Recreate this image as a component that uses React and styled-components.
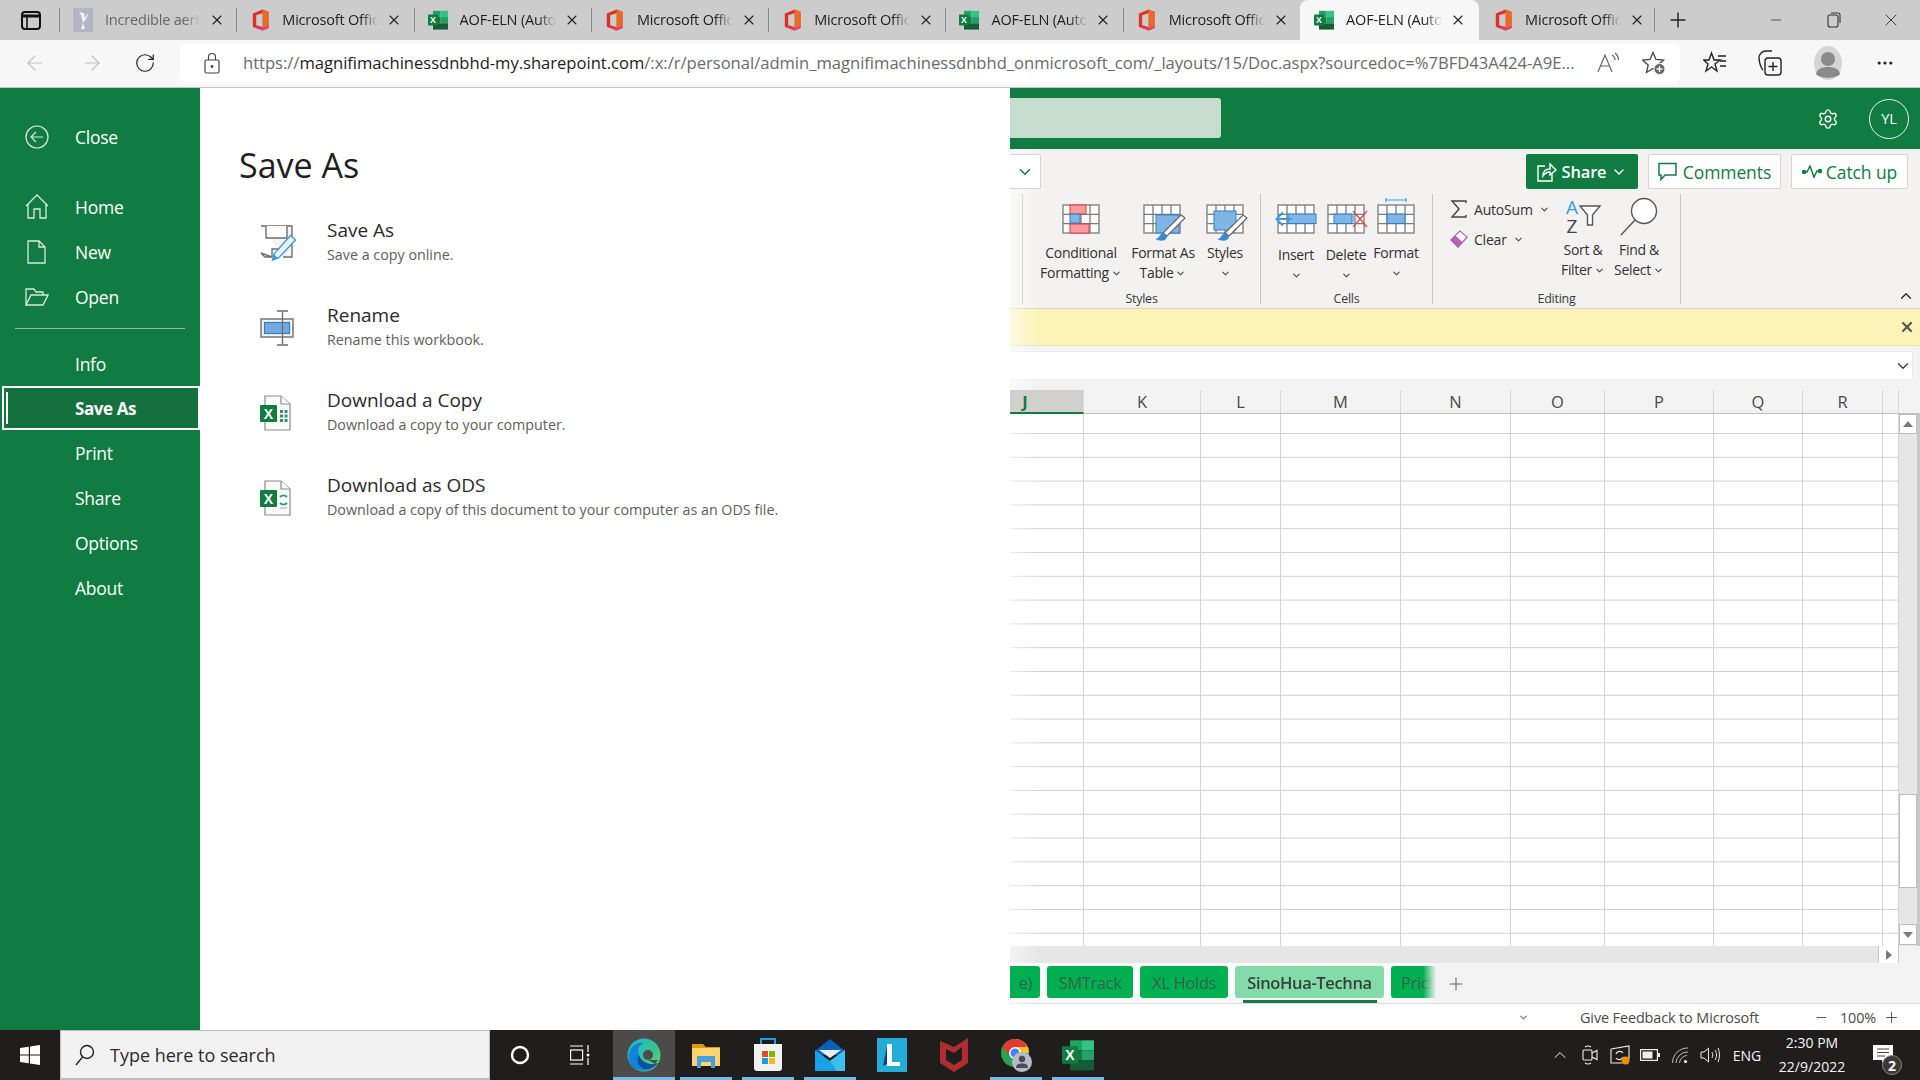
import React from "react";
import styled, { createGlobalStyle } from "styled-components";
import { Settings, ChevronDown, ChevronUp, X, Plus, Minus, RotateCw, ArrowLeft, ArrowRight, MoreHorizontal } from "lucide-react";

const Global = createGlobalStyle`
  html, body { margin: 0; padding: 0; background: #fff; }
  body { font-family: "Open Sans", "Noto Sans", sans-serif; color: #252423; }
  * { box-sizing: border-box; }
  svg { display: block; flex-shrink: 0; }
`;

const Page = styled.div`
  width: 1920px; height: 1080px; display: flex; flex-direction: column; overflow: hidden;
`;

/* ---------- browser chrome ---------- */
const TabStrip = styled.div`
  height: 40px; background: #cccccc; display: flex; align-items: stretch;
`;
const SideToggle = styled.div`
  width: 59px; display: flex; align-items: center; justify-content: center; padding-left: 2px;
`;
const Tab = styled.div`
  position: relative; width: ${p => p.$w || 177.3}px; display: flex; align-items: center; padding-left: 14px;
  background: ${p => (p.$active ? "#f7f7f7" : "transparent")};
  border-radius: ${p => (p.$active ? "8px 8px 0 0" : "0")};
  &::before {
    content: ""; position: absolute; left: 0; top: 8px; bottom: 8px; width: 1px;
    background: ${p => (p.$nosep ? "transparent" : "#8a8a8a")};
  }
`;
const TabIcon = styled.div`
  width: 20px; height: 24px; display: flex; align-items: center; justify-content: center; margin-right: 12px;
`;
const TabTitle = styled.div`
  width: 96px; margin-top: -2px; font-size: 14.5px; letter-spacing: -0.2px; white-space: nowrap; overflow: hidden; color: ${p => p.$dim ? "#666" : "#222"};
  -webkit-mask-image: linear-gradient(to right, #000 82%, transparent 100%);
  mask-image: linear-gradient(to right, #000 82%, transparent 100%);
`;
const TabClose = styled.div`
  width: 32px; display: flex; justify-content: center; color: #222;
`;
const NewTab = styled.div`
  width: 46px; display: flex; align-items: center; justify-content: center; color: #222;
  border-left: 1px solid #8a8a8a; margin: 8px 0; margin-left: -1px;
`;
const WinControls = styled.div`
  margin-left: auto; display: flex; align-items: center; color: #333;
`;
const WinBtn = styled.div`
  width: 57.5px; display: flex; justify-content: center;
`;

const Toolbar = styled.div`
  height: 48px; background: #f7f7f7; border-bottom: 1px solid #c4c4c4; display: flex; align-items: center; padding: 0 9px 2px 7px;
`;
const ToolBtn = styled.div`
  width: ${p => p.$w}px; display: flex; justify-content: center; align-items: center; color: ${p => p.$dim ? "#c2c2c2" : "#222"};
`;
const AddressBar = styled.div`
  width: 1500px; height: 38px; margin-left: 11px; background: #fff; border-radius: 6px; display: flex; align-items: center; padding-left: 24px; margin-right: 7px;
`;
const Url = styled.div`
  width: 1343px; margin-left: 23px; font-size: 16.6px; letter-spacing: -0.02px; color: #6a6a6a; white-space: nowrap; overflow: hidden;
  b { font-weight: 400; color: #1c1c1c; }
`;
const AddrIcon = styled.div`
  width: 45px; display: flex; justify-content: center; color: #444;
`;

/* ---------- main ---------- */
const Main = styled.div`
  flex: 1; display: flex; min-height: 0;
`;
const Sidebar = styled.nav`
  width: 200px; background: #107c41; padding-top: 26px; display: flex; flex-direction: column; color: #fff;
`;
const NavItem = styled.div`
  position: relative; height: 45px; display: flex; align-items: center; font-size: 17.5px; letter-spacing: -0.25px;
  margin-top: ${p => p.$mt || 0}px; padding-left: 25px;
  ${p => p.$selected && `
    height: 44px; margin-left: 2px; padding-left: 21px; background: #14703f; border: 2px solid #fff; font-size: 17px; font-weight: 700; letter-spacing: -0.4px;
    &::before { content: ""; position: absolute; left: 2px; top: 4px; bottom: 4px; width: 2px; background: #fff; }
  `}
`;
const NavIcon = styled.div`
  width: 50px; display: flex; justify-content: flex-start;
`;
const NavDivider = styled.div`
  height: 1px; margin: 9px 15px 12px; background: #8dbfa3;
`;

const Panel = styled.section`
  width: 810px; background: #fff; padding: 55px 0 0 39px; display: flex; flex-direction: column;
`;
const PanelTitle = styled.h1`
  margin: 0 0 13px; font-size: 34px; line-height: 44px; font-weight: 500; color: #201f1e;
`;
const OptionRow = styled.div`
  height: 85px; display: flex; align-items: center; padding-left: 21px;
`;
const OptionIcon = styled.div`
  width: 67px; display: flex;
`;
const OptionText = styled.div`
  margin-top: -2px;
`;
const OptionTitle = styled.div`
  font-size: 19px; line-height: 25px; margin-bottom: 2px; color: #2b2a29;
`;
const OptionDesc = styled.div`
  font-size: 14.3px; line-height: 20px; color: #605e5c;
`;

/* ---------- excel behind ---------- */
const Excel = styled.div`
  position: relative; width: 910px; display: flex; flex-direction: column; overflow: hidden;
  &::after {
    content: ""; position: absolute; left: 0; top: 61px; bottom: 26px; width: 30px; pointer-events: none;
    background: linear-gradient(to right, rgba(255,255,255,.55), rgba(255,255,255,0));
  }
`;
const ExcelHeader = styled.div`
  height: 61px; background: #107c41; display: flex; align-items: center; padding-right: 11px; color: #fff;
`;
const SearchBox = styled.div`
  width: 211px; height: 40px; margin-top: -1px; background: #c6dccf; border-radius: 0 3px 3px 0;
`;
const HeaderGear = styled.div`
  margin-left: auto; margin-right: 30px;
`;
const Avatar = styled.div`
  width: 40px; height: 40px; border: 1px solid #e8f1ec; border-radius: 50%; display: flex; align-items: center; justify-content: center; font-size: 14.5px;
`;
const Ribbon = styled.div`
  height: 159px; background: #f3f2f1; display: flex; flex-direction: column; position: relative;
`;
const RibbonTop = styled.div`
  height: 45px; padding: 5px 12px 5px 0; display: flex; align-items: stretch; gap: 10px;
`;
const ChevBox = styled.div`
  position: relative; z-index: 1; width: 31px; background: #fff; border: 1px solid #d6d4d2; border-left: 0; border-radius: 0 2px 2px 0; display: flex; align-items: center; justify-content: center; color: #107c41; margin-right: auto;
`;
const ShareBtn = styled.div`
  width: 112px; background: #107c41; border-radius: 2px; color: #fff; display: flex; align-items: center; justify-content: center; gap: 5px; font-size: 16.5px; font-weight: 600; letter-spacing: -.2px;
`;
const OutlineBtn = styled.div`
  width: ${p => p.$w}px; background: #fff; border: 1px solid #d6d4d2; border-radius: 2px; color: #107c41; display: flex; align-items: center; justify-content: center; gap: ${p => p.$gap || 6}px; font-size: 17.5px; font-weight: 500; letter-spacing: -.1px;
`;
const Groups = styled.div`
  height: 110px; display: flex;
`;
const Group = styled.div`
  width: ${p => p.$w}px; border-right: 1px solid ${p => p.$noline ? "transparent" : "#c8c6c4"}; display: flex; flex-direction: column;
`;
const GroupBody = styled.div`
  flex: 1; display: flex; padding-left: ${p => p.$pl || 0}px; gap: ${p => p.$gap || 0}px; min-height: 0;
`;
const GroupLabel = styled.div`
  height: 16px; line-height: 16px; margin-bottom: -3px; text-align: center; font-size: 12.5px; letter-spacing: -.25px; color: #3b3a39;
`;
const RBtn = styled.div`
  width: ${p => p.$w}px; display: flex; flex-direction: column; align-items: center;
`;
const RIcon = styled.div`
  height: 49px; padding-top: ${p => p.$pt || 0}px; display: flex; justify-content: center;
`;
const RLabel = styled.div`
  margin-top: ${p => p.$mt || 0}px; font-size: 14px; line-height: 20px; letter-spacing: -.3px; text-align: center; white-space: nowrap; color: #323130;
  svg { display: inline-block; vertical-align: -1px; margin-left: 2px; }
`;
const ChevLine = styled.div`
  margin-top: ${p => p.$mt || 0}px; height: 20px; display: flex; align-items: center; justify-content: center; color: #444;
`;
const EditCol = styled.div`
  width: 105px; display: flex; flex-direction: column; gap: 6px; padding-top: 3px;
`;
const EditRow = styled.div`
  height: 24px; display: flex; align-items: center; font-size: 14px; letter-spacing: -.2px; color: #323130; gap: 6px;
`;
const Collapse = styled.div`
  position: absolute; right: 5px; bottom: 3px; color: #222;
`;
const Yellow = styled.div`
  height: 38px; background: #fbf4b6; border-top: 1px solid #d9d6b0; border-bottom: 1px solid #e6e2a8; display: flex; align-items: center; justify-content: flex-end; padding-right: 5px; color: #555;
`;
const FormulaWrap = styled.div`
  height: 34px; background: #f3f3f3; padding: 5px 7px 0 0;
`;
const Formula = styled.div`
  height: 29px; background: #fff; border: 1px solid #ebebeb; border-left: 0; display: flex; align-items: center; justify-content: flex-end; color: #333;
`;
const ColHeader = styled.div`
  height: 34px; background: #f3f3f3; display: flex; padding-top: 10px; border-bottom: 1px solid #bdbdbd;
`;
const ColCell = styled.div`
  position: relative; width: ${p => p.$w}px; border-right: 1px solid #d8d8d8; display: flex; align-items: center; justify-content: center; font-size: 16.5px; color: #4c4a48;
  ${p => p.$sel && `z-index: 1; background: #d2d0ce; color: #107c41; font-weight: 700; border-bottom: 2px solid #107c41; margin-bottom: -1px; padding-right: 43px;`}
`;
const GridArea = styled.div`
  height: 532px; display: flex; background: #fff;
`;
const Cells = styled.div`
  width: 889px; display: flex;
  background-image: linear-gradient(to bottom, #d0d0d0 1px, transparent 1px);
  background-size: 100% 23.8px; background-position: 0 19px;
`;
const CellCol = styled.div`
  width: ${p => p.$w}px; border-right: 1px solid #d4d4d4;
`;
const VScroll = styled.div`
  width: 21px; display: flex; flex-direction: column; background: #e6e6e6; border-right: 3px solid #c8c8c8;
`;
const ScrollBtn = styled.div`
  height: ${p => p.$h}px; background: #fff; border: 1px solid #bdbdbd; display: flex; align-items: center; justify-content: center; margin-top: ${p => p.$mt || 0}px; color: #777; font-size: 9px;
`;
const HScroll = styled.div`
  height: 17px; display: flex; background: #f3f3f3;
`;
const HTrack = styled.div`
  width: 868px; background: #e6e6e6;
`;
const HBtn = styled.div`
  width: 21px; background: #fff; border: 1px solid #c8c8c8; border-top: 0; border-bottom: 0; display: flex; align-items: center; justify-content: center;
`;
const SheetRow = styled.div`
  height: 41px; display: flex; background: #f3f3f3; border-bottom: 1px solid #dedede;
`;
const SheetTabs = styled.div`
  position: relative; z-index: 1; width: 426px; background: #fbfbfb; display: flex; gap: 7px; padding-top: 3px; overflow: hidden;
  -webkit-mask-image: linear-gradient(to right, #000 97%, transparent 100%);
`;
const SheetTab = styled.div`
  position: relative; flex: none; width: ${p => p.$w}px; height: 32px; border-radius: ${p => p.$first ? "0 3px 3px 0" : "3px"}; background: ${p => p.$active ? "#84dbaa" : "#00b050"};
  color: ${p => p.$active ? "#33403a" : "#35604a"}; font-size: 16.5px; letter-spacing: -.35px; font-weight: ${p => p.$active ? 600 : 400}; display: flex; align-items: center; justify-content: ${p => p.$first ? "flex-end" : "center"}; padding: ${p => p.$first ? "0 8px 0 0" : "0"}; white-space: nowrap; overflow: ${p => p.$clip ? "hidden" : "visible"};
  ${p => p.$clip && "justify-content: flex-start; padding-left: 10px;"}
  ${p => p.$active && `&::after { content: ""; position: absolute; left: 8px; right: 7px; bottom: -5px; height: 3px; background: #1e7a48; }`}
`;
const SheetAdd = styled.div`
  width: 40px; display: flex; align-items: center; justify-content: center; color: #666; padding-top: 2px;
`;
const StatusBar = styled.div`
  flex: 1; background: #fff; display: flex; align-items: center; font-size: 14.4px; letter-spacing: -.1px; color: #4c4a48;
`;
const StatusItem = styled.div`
  margin-left: ${p => p.$ml}px; display: flex; align-items: center; white-space: nowrap;
`;

/* ---------- taskbar ---------- */
const Taskbar = styled.footer`
  height: 50px; background: #201e1d; display: flex; align-items: stretch; color: #fff;
`;
const StartBtn = styled.div`
  width: 60px; display: flex; align-items: center; justify-content: center;
`;
const TaskSearch = styled.div`
  width: 430px; background: #f2f2f2; border: 1px solid #bdbdbd; border-bottom-width: 2px; display: flex; align-items: center; padding-left: 14px; gap: 15px; font-size: 18px; color: #2b2b2b;
`;
const TaskTool = styled.div`
  width: 60px; display: flex; align-items: center; justify-content: center;
`;
const AppBtn = styled.div`
  position: relative; width: 62px; display: flex; align-items: center; justify-content: center; margin-left: ${p => p.$ml || 0}px;
  background: ${p => p.$active ? "#4d4b4a" : "transparent"};
  ${p => p.$open && `&::after { content: ""; position: absolute; left: ${p.$active ? 0 : 5}px; right: ${p.$active ? 0 : 5}px; bottom: 0; height: 3px; background: #76b9ed; }`}
`;
const Tray = styled.div`
  margin-left: auto; display: flex; align-items: center; padding-right: 9px;
`;
const TrayBtn = styled.div`
  width: ${p => p.$w || 30}px; display: flex; align-items: center; justify-content: center; font-size: 14px; color: #f4f4f4;
`;
const Clock = styled.div`
  width: 86px; text-align: center; font-size: 14px; line-height: 24px; color: #f4f4f4;
`;
const NotifIcon = styled.div`
  position: relative; width: 56px; height: 100%; display: flex; align-items: center; justify-content: center;
`;
const NotifBadge = styled.div`
  position: absolute; left: 27px; top: 25px; width: 20px; height: 20px; border-radius: 50%; background: #3a3938; border: 1px solid #8a8a8a; font-size: 14px; font-weight: 700; display: flex; align-items: center; justify-content: center;
`;

/* ---------- icons ---------- */
const OfficeIcon = ({ bg = "#ccc" }) => (
  <svg width="17" height="22" viewBox="0 0 17 22">
    <path d="M10.5 0.5 L16.5 2.8 V19 L10.5 21.5 L0.8 17.8 V4.5 Z" fill="#d8322a" />
    <path d="M10.5 0.5 L16.5 2.8 V19 L10.5 21.5 Z" fill="#ea6a22" />
    <path d="M0.8 17.8 L10.5 21.5 L16.5 19 V17 L10.5 19 Z" fill="#e23d7c" />
    <path d="M4.2 6.2 L10.5 4.3 V18 L4.2 16.2 Z" fill={bg} />
  </svg>
);
const ExcelIcon = ({ s = 20 }) => (
  <svg width={s} height={s} viewBox="0 0 24 24">
    <rect x="6" y="1" width="9" height="7.5" fill="#21a366" />
    <rect x="15" y="1" width="9" height="7.5" fill="#33c481" />
    <rect x="6" y="8.5" width="9" height="7.5" fill="#107c41" />
    <rect x="15" y="8.5" width="9" height="7.5" fill="#21a366" />
    <rect x="6" y="16" width="18" height="7.5" fill="#185c37" />
    <rect x="0" y="5.5" width="12" height="13" rx="1" fill="#107c41" />
    <text x="6" y="15.8" fontFamily="Liberation Sans" fontWeight="700" fontSize="10.5" textAnchor="middle" fill="#fff">X</text>
  </svg>
);
const SaveAsIcon = () => (
  <svg width="36" height="36" viewBox="0 0 36 36" fill="none">
    <path d="M1 1 H32 V32 H23 M12 32 H5 L1 28 Z" stroke="#6e6e6e" strokeWidth="1.4" fill="#f4f4f4" />
    <path d="M6 1 V13 H27 V1" stroke="#6e6e6e" strokeWidth="1.4" fill="#fff" />
    <path d="M12 32 V24 H23" stroke="#6e6e6e" strokeWidth="1.4" />
    <path d="M12.5 35 L14 29 L30.5 10.5 L35.5 15 L18.5 33 Z" fill="#eaf4fc" stroke="#3d9be0" strokeWidth="1.4" />
    <path d="M12 35.5 L13.5 29 L18.5 33.5 Z" fill="#3d9be0" />
  </svg>
);
const RenameIcon = () => (
  <svg width="36" height="36" viewBox="0 0 36 36" fill="none">
    <rect x="1" y="9" width="32" height="18" fill="#f4f4f4" stroke="#6e6e6e" strokeWidth="1.4" />
    <rect x="4.5" y="12.5" width="25" height="11" fill="#75a9dc" stroke="#2f7fc8" strokeWidth="1.2" />
    <path d="M17 1 H28 M17 35 H28 M22.5 1 V35" stroke="#6e6e6e" strokeWidth="1.3" />
  </svg>
);
const DocExcelIcon = ({ ods }) => (
  <svg width="32" height="36" viewBox="0 0 32 36" fill="none">
    <path d="M5 1 H21 L30 9 V35 H5 Z" fill="#fafafa" stroke="#8a8a8a" strokeWidth="1.2" />
    <path d="M21 1 V9 H30" stroke="#8a8a8a" strokeWidth="1.2" fill="#fff" />
    {ods ? (
      <g>
        <path d="M20 17 a5 5 0 0 1 7 0 M20 23 a5 5 0 0 0 7 0" stroke="#21a366" strokeWidth="2" />
        <path d="M20 28 H27" stroke="#b5b5b5" strokeWidth="1.2" />
      </g>
    ) : (
      <g fill="#3d8b66">
        <rect x="20" y="15" width="3" height="3" /><rect x="24.5" y="15" width="3" height="3" />
        <rect x="20" y="19.5" width="3" height="3" /><rect x="24.5" y="19.5" width="3" height="3" />
        <rect x="20" y="24" width="3" height="3" /><rect x="24.5" y="24" width="3" height="3" />
      </g>
    )}
    <rect x="0" y="10" width="17" height="17" rx="1" fill="#107c41" />
    <text x="8.5" y="24" fontFamily="Liberation Sans" fontWeight="700" fontSize="14" textAnchor="middle" fill="#fff">X</text>
  </svg>
);
const Table = ({ x = 0, y = 11, w = 36, h = 28 }) => (
  <g fill="none" stroke="#7a7a7a" strokeWidth="1.3">
    <rect x={x} y={y} width={w} height={h} fill="#fff" />
    <path d={`M${x + w / 4} ${y}V${y + h} M${x + w / 2} ${y}V${y + h} M${x + (3 * w) / 4} ${y}V${y + h} M${x} ${y + h / 3}H${x + w} M${x} ${y + (2 * h) / 3}H${x + w}`} />
  </g>
);
const Brush = () => (
  <g>
    <path d="M45 21 L49 24 L31 42 L27 39 Z" fill="#fff" stroke="#666" strokeWidth="1.2" />
    <path d="M19 45 C24 45 23 39 28 39 L31 42 C31 47 25 48 19 45 Z" fill="#3b8ad0" />
  </g>
);
const CFIcon = () => (
  <svg width="44" height="49" viewBox="0 0 44 49">
    <Table x={4} />
    <rect x="11" y="11" width="16" height="9" fill="#fb9aa0" stroke="#e03a3a" />
    <rect x="11" y="20" width="10" height="9" fill="#7fb6e6" stroke="#2f7fc8" />
    <rect x="11" y="30" width="19" height="9" fill="#fb9aa0" stroke="#e03a3a" />
  </svg>
);
const FormatTableIcon = () => (
  <svg width="54" height="49" viewBox="0 0 54 49">
    <Table x={8} />
    <rect x="20" y="21" width="23" height="18" fill="#7fb6e6" stroke="#2f7fc8" />
    <Brush />
  </svg>
);
const StylesIcon = () => (
  <svg width="54" height="49" viewBox="0 0 54 49">
    <Table x={9} />
    <rect x="16" y="17" width="22" height="19" fill="#7fb6e6" stroke="#2f7fc8" />
    <Brush />
  </svg>
);
const InsertIcon = () => (
  <svg width="44" height="49" viewBox="0 0 44 49">
    <Table x={4} />
    <rect x="14" y="20" width="28" height="9.5" fill="#7fb6e6" stroke="#2f7fc8" />
    <path d="M18 25 H4 M9 18.5 L2.5 25 L9 31.5" fill="none" stroke="#3b9ae0" strokeWidth="2" />
  </svg>
);
const DeleteIcon = () => (
  <svg width="44" height="49" viewBox="0 0 44 49">
    <Table x={4} />
    <rect x="10" y="20" width="18" height="9.5" fill="#7fb6e6" stroke="#2f7fc8" />
    <path d="M28 20 L33 25 L28 29.5 Z" fill="#7fb6e6" />
    <path d="M29 17 L43 33 M43 17 L29 33" stroke="#e8484a" strokeWidth="1.4" />
  </svg>
);
const FormatIcon = () => (
  <svg width="44" height="49" viewBox="0 0 44 49">
    <Table x={4} />
    <rect x="13" y="20" width="18" height="9.5" fill="#7fb6e6" stroke="#2f7fc8" />
    <path d="M12 6 H32 M12 4 V8 M32 4 V8" stroke="#3b9ae0" strokeWidth="1.2" fill="none" />
  </svg>
);
const SortIcon = () => (
  <svg width="38" height="38" viewBox="0 0 38 38">
    <text x="8" y="17" fontFamily="Open Sans" fontSize="19" textAnchor="middle" fill="#3b9ae0">A</text>
    <text x="8" y="36" fontFamily="Open Sans" fontSize="19" textAnchor="middle" fill="#444">Z</text>
    <path d="M16 9 H36 L28.5 18 V28 H23.5 V18 Z" fill="#fff" stroke="#555" strokeWidth="1.4" />
  </svg>
);
const FindIcon = () => (
  <svg width="40" height="40" viewBox="0 0 40 40" fill="none">
    <circle cx="25" cy="14" r="12.5" fill="#fff" stroke="#555" strokeWidth="1.4" />
    <path d="M16 23 L2 38" stroke="#555" strokeWidth="1.4" />
  </svg>
);
const SigmaIcon = () => (
  <svg width="18" height="18" viewBox="0 0 18 18" fill="none">
    <path d="M16 3 V1 H2 L9 9 L2 17 H16 V15" stroke="#444" strokeWidth="1.4" />
  </svg>
);
const EraserIcon = () => (
  <svg width="18" height="18" viewBox="0 0 20 20">
    <path d="M1 11 L11 1 L19 8 L9 19 Z" fill="#fff" stroke="#a550a8" strokeWidth="1.2" />
    <path d="M1 11 L6 6 L14 13.5 L9 19 Z" fill="#b660ba" />
  </svg>
);
const ShareIcon = ({ c = "#fff" }) => (
  <svg width="20" height="20" viewBox="0 0 20 20" fill="none" stroke={c} strokeWidth="1.4">
    <path d="M8 4 H1 V19 H15 V12" />
    <path d="M6 14 C6 9 9 7 13 7 V2 L19 8 L13 13 V10 C10 10 8 11 6 14 Z" />
  </svg>
);
const CommentIcon = () => (
  <svg width="19" height="19" viewBox="0 0 19 19" fill="none" stroke="#107c41" strokeWidth="1.5">
    <path d="M1 1.5 H18 V13 H7 L3 17.5 V13 H1 Z" />
  </svg>
);
const CatchIcon = () => (
  <svg width="20" height="14" viewBox="0 0 20 14" fill="none" stroke="#107c41" strokeWidth="1.5">
    <path d="M2 7 H5 L8 1 L12 12 L15 6 H17" />
    <circle cx="2" cy="7" r="1.5" fill="#107c41" /><circle cx="18" cy="6" r="1.5" fill="#107c41" />
  </svg>
);
const TabsIcon = () => (
  <svg width="20" height="19" viewBox="0 0 20 19" fill="none" stroke="#111" strokeWidth="2">
    <rect x="1" y="1" width="18" height="17" rx="3" />
    <path d="M1 5 H19" strokeWidth="3" /><path d="M6 5 V18" strokeWidth="1.6" />
  </svg>
);
const FavPerson = () => (
  <svg width="20" height="24" viewBox="0 0 20 24">
    <rect width="20" height="24" fill="#b4b4c4" />
    <path d="M6 4 C9 7 9 12 10 15 C13 11 15 8 15 5 L12 10 L11 5 Z M10 15 L8 21 H12 Z" fill="#f2f2f4" />
  </svg>
);
const LockIcon = () => (
  <svg width="16" height="22" viewBox="0 0 16 22" fill="none" stroke="#444" strokeWidth="1.2">
    <rect x="1" y="8" width="14" height="13" rx="1.5" />
    <path d="M4.5 8 V5 a3.5 3.5 0 0 1 7 0 V8" />
    <circle cx="8" cy="14.5" r="0.8" fill="#444" />
  </svg>
);
const ReadAloudIcon = () => (
  <svg width="24" height="22" viewBox="0 0 24 22" fill="none" stroke="#666" strokeWidth="1.2">
    <path d="M1 20 L8 3 L15 20 M3.5 14 H12.5" />
    <path d="M15 3 C17 4 18 6 18 8 M18 1 C20.5 3 21.5 5 21.5 8" />
  </svg>
);
const FavAddIcon = () => (
  <svg width="24" height="24" viewBox="0 0 24 24" fill="none" stroke="#444" strokeWidth="1.3">
    <path d="M11 1.5 L14 8.5 L21.5 9 L15.8 14 L17.5 21.5 L11 17.5 L4.5 21.5 L6.2 14 L0.5 9 L8 8.5 Z" />
    <circle cx="17.5" cy="18" r="5.5" fill="#666" stroke="#f7f7f7" strokeWidth="1" />
    <path d="M17.5 15 V21 M14.5 18 H20.5" stroke="#fff" strokeWidth="1.3" />
  </svg>
);
const FavoritesIcon = () => (
  <svg width="24" height="24" viewBox="0 0 24 24" fill="none" stroke="#222" strokeWidth="1.4">
    <path d="M8.5 2 L11 9 H17 L12 13 L14 20 L8.5 16 L3 20 L5 13 L0.8 9 H6 Z" />
    <path d="M15 5 H23 M17 10 H23 M17 15 H23" />
  </svg>
);
const CollectionsIcon = () => (
  <svg width="24" height="26" viewBox="0 0 24 26" fill="none" stroke="#222" strokeWidth="1.4">
    <path d="M5 20 C3 18 1 12 1 8 C1 4 4 1 8 1 H14" />
    <rect x="7" y="8" width="16" height="17" rx="3" />
    <path d="M15 12 V21 M10.5 16.5 H19.5" />
  </svg>
);
const ProfileIcon = () => (
  <svg width="28" height="34" viewBox="0 0 28 34">
    <ellipse cx="14" cy="17" rx="14" ry="17" fill="#d5d5d5" />
    <circle cx="14" cy="13" r="7" fill="#8a8a8a" />
    <path d="M2 28 C3 22 9 21 14 21 C19 21 25 22 26 28 C22 33 6 33 2 28 Z" fill="#8a8a8a" />
  </svg>
);
const CloseCircle = () => (
  <svg width="24" height="24" viewBox="0 0 24 24" fill="none" stroke="#dbe9e0" strokeWidth="1.2">
    <circle cx="12" cy="12" r="11" />
    <path d="M18 12 H6 M11 7 L6 12 L11 17" />
  </svg>
);
const HomeIcon = () => (
  <svg width="24" height="26" viewBox="0 0 24 26" fill="none" stroke="#dbe9e0" strokeWidth="1.3">
    <path d="M1 12 L12 1 L23 12 M3 10 V24 H9 V15 H15 V24 H21 V10" />
  </svg>
);
const NewIcon = () => (
  <svg width="24" height="24" viewBox="0 0 24 24" fill="none" stroke="#dbe9e0" strokeWidth="1.3">
    <path d="M3 1 H14 L20 7 V23 H3 Z M14 1 V7 H20" />
  </svg>
);
const OpenIcon = () => (
  <svg width="24" height="18" viewBox="0 0 24 18" fill="none" stroke="#dbe9e0" strokeWidth="1.3">
    <path d="M1 17 V1 H9 L11 4 H18 V7 M1 17 H18 L23 7 H6 Z" />
  </svg>
);
const WinLogo = () => (
  <svg width="20" height="20" viewBox="0 0 20 20" fill="#fff">
    <path d="M0 3 L8.8 1.8 V9.4 H0 Z M10 1.6 L20 0 V9.4 H10 Z M0 10.6 H8.8 V18.2 L0 17 Z M10 10.6 H20 V20 L10 18.4 Z" />
  </svg>
);
const SearchIcon = () => (
  <svg width="20" height="24" viewBox="0 0 20 24" fill="none" stroke="#222" strokeWidth="1.4">
    <circle cx="12" cy="9" r="6.5" /><path d="M7.5 14 L1 22" />
  </svg>
);
const CortanaIcon = () => (
  <svg width="20" height="20" viewBox="0 0 20 20" fill="none" stroke="#fff" strokeWidth="2.4"><circle cx="10" cy="10" r="8" /></svg>
);
const TaskViewIcon = () => (
  <svg width="20" height="20" viewBox="0 0 20 20" fill="none" stroke="#fff" strokeWidth="1.2">
    <path d="M0 1 H13 M0 19 H13 M18 0 V7 M18 13 V20" />
    <rect x="0.6" y="5" width="12" height="10" />
    <circle cx="18" cy="10" r="1.5" fill="#fff" stroke="none" />
  </svg>
);
const EdgeIcon = () => (
  <svg width="34" height="34" viewBox="0 0 34 34">
    <defs>
      <linearGradient id="eg" x1="0" y1="0" x2="1" y2="1"><stop offset="0" stopColor="#1bb6d8" /><stop offset=".6" stopColor="#37c58d" /><stop offset="1" stopColor="#6fdc6a" /></linearGradient>
    </defs>
    <circle cx="17" cy="17" r="16.5" fill="url(#eg)" />
    <path d="M2 22 C0 10 9 3 17 5 C12 7 10 11 12 17 C14 25 24 28 31 25 C26 32 18 34 12 32 C6 31 3 27 2 22 Z" fill="#1283d6" />
    <path d="M12 17 C14 25 24 28 31 25 C26 31 18 33 14 29 C10 26 10 21 12 17 Z" fill="#0c4fa4" />
    <circle cx="21" cy="17" r="5" fill="#4d4b4a" />
    <path d="M21 22 H31 L28 26 Z" fill="#4d4b4a" />
  </svg>
);
const FolderIcon = () => (
  <svg width="28" height="26" viewBox="0 0 28 26">
    <path d="M0 2 H11 L14 5 H28 V24 H0 Z" fill="#d99c0c" />
    <rect x="0" y="6" width="28" height="18" rx="1" fill="#fcd46d" />
    <path d="M5 26 V14 H23 V26 H19 V20 H9 V26 Z" fill="#4a9ee0" />
  </svg>
);
const StoreIcon = () => (
  <svg width="30" height="34" viewBox="0 0 30 34">
    <path d="M8 7 V1 H22 V7" fill="none" stroke="#1ba1e2" strokeWidth="2" />
    <path d="M1 6 H29 V30 a3 3 0 0 1 -3 3 H4 a3 3 0 0 1 -3 -3 Z" fill="#f2f2f2" />
    <rect x="9" y="13" width="6" height="6" fill="#e6491c" /><rect x="16" y="13" width="6" height="6" fill="#7db800" />
    <rect x="9" y="20" width="6" height="6" fill="#0ba2e8" /><rect x="16" y="20" width="6" height="6" fill="#fcb714" />
  </svg>
);
const MailIcon = () => (
  <svg width="30" height="32" viewBox="0 0 30 32">
    <path d="M0 12 L15 0 L30 12 V16 H0 Z" fill="#0a62b6" />
    <path d="M4 11 H26 L15 19 Z" fill="#e8eef4" />
    <path d="M0 11 L15 22 L30 11 V32 H0 Z" fill="#1aa0e6" />
    <path d="M15 22 L30 11 V32 H22 Z" fill="#3cc0ef" />
  </svg>
);
const LIcon = () => (
  <svg width="30" height="34" viewBox="0 0 30 34">
    <rect width="30" height="34" fill="#24acd8" />
    <path d="M6 28 L10 8 V26 Z" fill="#0d3f88" />
    <path d="M10 6 H15 V24 H23 V28 H10 Z" fill="#fff" />
  </svg>
);
const McAfeeIcon = () => (
  <svg width="28" height="34" viewBox="0 0 28 34">
    <path d="M0 3 L14 9 L28 0 V25 L14 34 L0 25 Z M6 11 V22 L14 27 L22 22 V9 L14 15 Z" fill="#b02e30" fillRule="evenodd" />
  </svg>
);
const ChromeIcon = () => (
  <svg width="32" height="34" viewBox="0 0 32 34">
    <circle cx="15" cy="15" r="14" fill="#2ba24c" />
    <path d="M15 1 A14 14 0 0 1 29 15 H15 Z" fill="#fbc02d" />
    <path d="M15 1 A14 14 0 0 0 2.5 9 L9 17 L15 9 H27 A14 14 0 0 0 15 1 Z" fill="#e33b2e" />
    <circle cx="15" cy="15" r="6" fill="#fff" />
    <circle cx="15" cy="15" r="4.5" fill="#3f87f0" />
    <circle cx="22" cy="24" r="10" fill="#b9bcc4" />
    <circle cx="22" cy="21" r="3.2" fill="#4a4d57" />
    <path d="M16 30 C16 26 19 25.5 22 25.5 C25 25.5 28 26 28 30 Z" fill="#4a4d57" />
  </svg>
);
const MeetIcon = () => (
  <svg width="16" height="22" viewBox="0 0 16 22" fill="none" stroke="#eee" strokeWidth="1.1">
    <rect x="1" y="6" width="9" height="10" rx="1" /><path d="M10 9 L15 6.5 V15.5 L10 13" />
    <path d="M3 3 C5 1.6 7 1.6 9 3 M3 19 C5 20.4 7 20.4 9 19" />
  </svg>
);
const SyncIcon = () => (
  <svg width="20" height="20" viewBox="0 0 20 20" fill="none" stroke="#eee" strokeWidth="1.1">
    <path d="M1 4 L19 1 V14 M1 4 V18 H12" />
    <path d="M6 9 a4 4 0 0 1 7 -1 M13 12 a4 4 0 0 1 -7 1" />
    <circle cx="15.5" cy="15.5" r="4" fill="#f28c00" stroke="none" />
  </svg>
);
const BatteryIcon = () => (
  <svg width="20" height="12" viewBox="0 0 20 12">
    <rect x="0.6" y="0.6" width="16.8" height="10.8" fill="none" stroke="#eee" strokeWidth="1.2" />
    <rect x="2.5" y="2.5" width="10" height="7" fill="#eee" />
    <rect x="18" y="4" width="2" height="4" fill="#eee" />
  </svg>
);
const WifiIcon = () => (
  <svg width="17" height="17" viewBox="0 0 17 17" fill="none" stroke="#bbb" strokeWidth="1">
    <path d="M0.5 16 A15 15 0 0 1 16 1 M4 16 A11.5 11.5 0 0 1 16 5 M7.5 16 A8 8 0 0 1 15 8.5" />
    <circle cx="13.5" cy="14.5" r="1.6" fill="#eee" stroke="none" />
  </svg>
);
const VolumeIcon = () => (
  <svg width="20" height="18" viewBox="0 0 20 18" fill="none" stroke="#eee" strokeWidth="1">
    <path d="M1 6 H4 L8.5 2 V16 L4 12 H1 Z" />
    <path d="M12 6 C13 8 13 10 12 12 M15 4 C17 7 17 11 15 14 M18 2 C20 6 20 12 18 16" />
  </svg>
);
const ChatIcon = () => (
  <svg width="20" height="20" viewBox="0 0 20 20">
    <path d="M0 0 H20 V15 H12 L9 18 V15 H0 Z" fill="#fff" />
    <path d="M4 4 H16 M4 7.5 H16 M4 11 H12" stroke="#444" strokeWidth="1" />
  </svg>
);
const TriIcon = ({ dir }) => (
  <svg width="10" height="8" viewBox="0 0 10 8" style={dir === "right" ? { transform: "rotate(90deg)" } : dir === "down" ? { transform: "rotate(180deg)" } : undefined}>
    <path d="M5 1 L10 7 H0 Z" fill="#7a7a7a" />
  </svg>
);
const Mini = () => <ChevronDown size={11} strokeWidth={2.2} color="#444" />;

/* ---------- data ---------- */
const TABS = [
  { kind: "fav", title: "Incredible aerial", dim: true },
  { kind: "office", title: "Microsoft Office" },
  { kind: "excel", title: "AOF-ELN (AutoSaved)" },
  { kind: "office", title: "Microsoft Office" },
  { kind: "office", title: "Microsoft Office" },
  { kind: "excel", title: "AOF-ELN (AutoSaved)" },
  { kind: "office", title: "Microsoft Office" },
  { kind: "excel", title: "AOF-ELN (AutoSaved)", active: true, w: 179 },
  { kind: "office", title: "Microsoft Office", nosep: true, w: 176 },
];
const COLS = [
  ["J", 74], ["K", 117], ["L", 80], ["M", 120], ["N", 110], ["O", 94], ["P", 109], ["Q", 89], ["R", 80], ["", 16],
];
const NAV_TOP = [
  ["Home", <HomeIcon />], ["New", <NewIcon />], ["Open", <OpenIcon />],
];
const NAV_BOTTOM = ["Info", "Save As", "Print", "Share", "Options", "About"];
const OPTIONS = [
  ["Save As", "Save a copy online.", <SaveAsIcon />],
  ["Rename", "Rename this workbook.", <RenameIcon />],
  ["Download a Copy", "Download a copy to your computer.", <DocExcelIcon />],
  ["Download as ODS", "Download a copy of this document to your computer as an ODS file.", <DocExcelIcon ods />],
];

const tabIcon = k => (k === "fav" ? <FavPerson /> : k === "office" ? <OfficeIcon /> : <ExcelIcon />);

export default function App() {
  return (
    <Page>
      <Global />
      <TabStrip>
        <SideToggle><TabsIcon /></SideToggle>
        {TABS.map((t, i) => (
          <Tab key={i} $active={t.active} $nosep={t.active || t.nosep} $w={t.w}>
            <TabIcon>{tabIcon(t.kind)}</TabIcon>
            <TabTitle $dim={t.dim}>{t.title}</TabTitle>
            <TabClose><X size={16} strokeWidth={1.6} /></TabClose>
          </Tab>
        ))}
        <NewTab><Plus size={24} strokeWidth={1.4} /></NewTab>
        <WinControls>
          <WinBtn><Minus size={16} strokeWidth={1.2} /></WinBtn>
          <WinBtn>
            <svg width="14" height="16" viewBox="0 0 14 16" fill="none" stroke="#333" strokeWidth="1.1"><rect x="1" y="3" width="10" height="12" rx="2" /><path d="M4 1 H11 a2 2 0 0 1 2 2 V11" /></svg>
          </WinBtn>
          <WinBtn><X size={20} strokeWidth={1.1} /></WinBtn>
        </WinControls>
      </TabStrip>
      <Toolbar>
        <ToolBtn $w={56} $dim><ArrowLeft size={24} strokeWidth={1.2} /></ToolBtn>
        <ToolBtn $w={58} $dim><ArrowRight size={24} strokeWidth={1.2} /></ToolBtn>
        <ToolBtn $w={48}><RotateCw size={22} strokeWidth={1.3} /></ToolBtn>
        <AddressBar>
          <LockIcon />
          <Url>https://<b>magnifimachinessdnbhd-my.sharepoint.com</b>/:x:/r/personal/admin_magnifimachinessdnbhd_onmicrosoft_com/_layouts/15/Doc.aspx?sourcedoc=%7BFD43A424-A9E...</Url>
          <AddrIcon><ReadAloudIcon /></AddrIcon>
          <AddrIcon><FavAddIcon /></AddrIcon>
        </AddressBar>
        <ToolBtn $w={56}><FavoritesIcon /></ToolBtn>
        <ToolBtn $w={54}><CollectionsIcon /></ToolBtn>
        <ToolBtn $w={62}><ProfileIcon /></ToolBtn>
        <ToolBtn $w={52}><MoreHorizontal size={20} strokeWidth={1.8} /></ToolBtn>
      </Toolbar>
      <Main>
        <Sidebar>
          <NavItem><NavIcon><CloseCircle /></NavIcon>Close</NavItem>
          {NAV_TOP.map(([label, icon], i) => (
            <NavItem key={label} $mt={i === 0 ? 25 : 0}><NavIcon>{icon}</NavIcon>{label}</NavItem>
          ))}
          <NavDivider />
          {NAV_BOTTOM.map(label => (
            <NavItem key={label} $selected={label === "Save As"}><NavIcon />{label}</NavItem>
          ))}
        </Sidebar>
        <Panel>
          <PanelTitle>Save As</PanelTitle>
          {OPTIONS.map(([title, desc, icon]) => (
            <OptionRow key={title}>
              <OptionIcon>{icon}</OptionIcon>
              <OptionText>
                <OptionTitle>{title}</OptionTitle>
                <OptionDesc>{desc}</OptionDesc>
              </OptionText>
            </OptionRow>
          ))}
        </Panel>
        <Excel>
          <ExcelHeader>
            <SearchBox />
            <HeaderGear><Settings size={22} strokeWidth={1.5} /></HeaderGear>
            <Avatar>YL</Avatar>
          </ExcelHeader>
          <Ribbon>
            <RibbonTop>
              <ChevBox><ChevronDown size={18} strokeWidth={2} /></ChevBox>
              <ShareBtn><ShareIcon />Share<ChevronDown size={16} strokeWidth={2} /></ShareBtn>
              <OutlineBtn $w={133}><CommentIcon />Comments</OutlineBtn>
              <OutlineBtn $w={117} $gap={4}><CatchIcon />Catch up</OutlineBtn>
            </RibbonTop>
            <Groups>
              <Group $w={13} />
              <Group $w={238}>
                <GroupBody $pl={20} $gap={3}>
                  <RBtn $w={76}><RIcon><CFIcon /></RIcon><RLabel>Conditional<br />Formatting<Mini /></RLabel></RBtn>
                  <RBtn $w={82}><RIcon><FormatTableIcon /></RIcon><RLabel>Format As<br />Table<Mini /></RLabel></RBtn>
                  <RBtn $w={36}><RIcon><StylesIcon /></RIcon><RLabel>Styles</RLabel><ChevLine><Mini /></ChevLine></RBtn>
                </GroupBody>
                <GroupLabel>Styles</GroupLabel>
              </Group>
              <Group $w={172}>
                <GroupBody $pl={10}>
                  <RBtn $w={50}><RIcon><InsertIcon /></RIcon><RLabel $mt={2}>Insert</RLabel><ChevLine><Mini /></ChevLine></RBtn>
                  <RBtn $w={50}><RIcon><DeleteIcon /></RIcon><RLabel $mt={2}>Delete</RLabel><ChevLine><Mini /></ChevLine></RBtn>
                  <RBtn $w={50}><RIcon><FormatIcon /></RIcon><RLabel>Format</RLabel><ChevLine><Mini /></ChevLine></RBtn>
                </GroupBody>
                <GroupLabel>Cells</GroupLabel>
              </Group>
              <Group $w={248}>
                <GroupBody $pl={17}>
                  <EditCol>
                    <EditRow><SigmaIcon />AutoSum<Mini /></EditRow>
                    <EditRow><EraserIcon />Clear<Mini /></EditRow>
                  </EditCol>
                  <RBtn $w={56}>
                    <RIcon $pt={3}><SortIcon /></RIcon>
                    <RLabel $mt={-3}>Sort &amp;<br />Filter<Mini /></RLabel>
                  </RBtn>
                  <RBtn $w={56}>
                    <RIcon $pt={3}><FindIcon /></RIcon>
                    <RLabel $mt={-3}>Find &amp;<br />Select<Mini /></RLabel>
                  </RBtn>
                </GroupBody>
                <GroupLabel>Editing</GroupLabel>
              </Group>
            </Groups>
            <Collapse><ChevronUp size={18} strokeWidth={1.6} /></Collapse>
          </Ribbon>
          <Yellow><X size={16} strokeWidth={3.2} /></Yellow>
          <FormulaWrap>
            <Formula><ChevronDown size={18} strokeWidth={1.6} /></Formula>
          </FormulaWrap>
          <ColHeader>
            {COLS.map(([c, w]) => <ColCell key={c + w} $w={w} $sel={c === "J"}>{c}</ColCell>)}
          </ColHeader>
          <GridArea>
            <Cells>
              {COLS.map(([c, w]) => <CellCol key={c + w} $w={w} />)}
            </Cells>
            <VScroll>
              <ScrollBtn $h={20}><TriIcon /></ScrollBtn>
              <ScrollBtn $h={94} $mt={360} />
              <ScrollBtn $h={21} $mt={36}><TriIcon dir="down" /></ScrollBtn>
            </VScroll>
          </GridArea>
          <HScroll>
            <HTrack />
            <HBtn><TriIcon dir="right" /></HBtn>
          </HScroll>
          <SheetRow>
            <SheetTabs>
              <SheetTab $w={30} $first>e)</SheetTab>
              <SheetTab $w={86}>SMTrack</SheetTab>
              <SheetTab $w={88}>XL Holds</SheetTab>
              <SheetTab $w={149} $active>SinoHua-Techna</SheetTab>
              <SheetTab $w={60} $clip>Pricing</SheetTab>
            </SheetTabs>
            <SheetAdd><Plus size={20} strokeWidth={1.3} /></SheetAdd>
          </SheetRow>
          <StatusBar>
            <StatusItem $ml={508}><ChevronDown size={11} strokeWidth={2.4} color="#777" /></StatusItem>
            <StatusItem $ml={51}>Give Feedback to Microsoft</StatusItem>
            <StatusItem $ml={55}><Minus size={15} strokeWidth={1.5} /></StatusItem>
            <StatusItem $ml={11}>100%</StatusItem>
            <StatusItem $ml={7}><Plus size={17} strokeWidth={1.3} /></StatusItem>
          </StatusBar>
        </Excel>
      </Main>
      <Taskbar>
        <StartBtn><WinLogo /></StartBtn>
        <TaskSearch><SearchIcon />Type here to search</TaskSearch>
        <TaskTool><CortanaIcon /></TaskTool>
        <TaskTool><TaskViewIcon /></TaskTool>
        <AppBtn $ml={3} $active $open><EdgeIcon /></AppBtn>
        <AppBtn $open><FolderIcon /></AppBtn>
        <AppBtn $open><StoreIcon /></AppBtn>
        <AppBtn $open><MailIcon /></AppBtn>
        <AppBtn><LIcon /></AppBtn>
        <AppBtn><McAfeeIcon /></AppBtn>
        <AppBtn $open><ChromeIcon /></AppBtn>
        <AppBtn $open><ExcelIcon s={32} /></AppBtn>
        <Tray>
          <TrayBtn><ChevronUp size={20} strokeWidth={1.2} /></TrayBtn>
          <TrayBtn><MeetIcon /></TrayBtn>
          <TrayBtn><SyncIcon /></TrayBtn>
          <TrayBtn><BatteryIcon /></TrayBtn>
          <TrayBtn><WifiIcon /></TrayBtn>
          <TrayBtn><VolumeIcon /></TrayBtn>
          <TrayBtn $w={44}>ENG</TrayBtn>
          <Clock>2:30 PM<br />22/9/2022</Clock>
          <NotifIcon><ChatIcon /><NotifBadge>2</NotifBadge></NotifIcon>
        </Tray>
      </Taskbar>
    </Page>
  );
}
